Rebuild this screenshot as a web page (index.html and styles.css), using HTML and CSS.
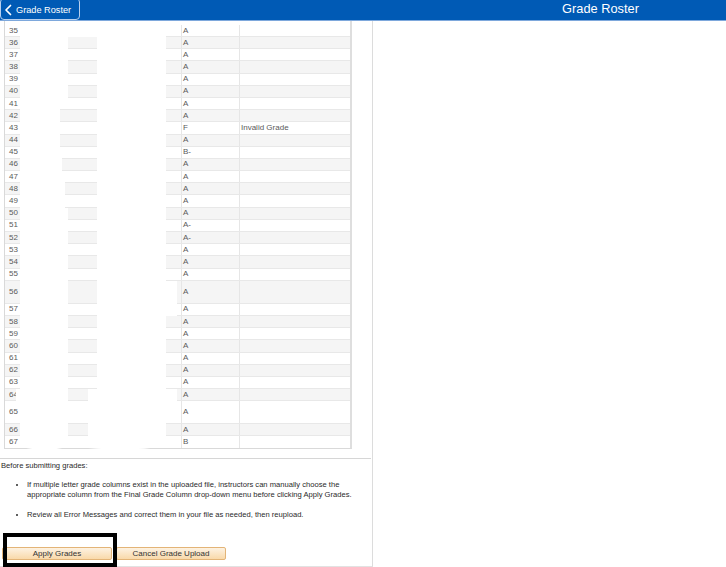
FILE: index.html
```html
<!DOCTYPE html>
<html lang="en">
<head>
<meta charset="utf-8">
<title>Grade Roster</title>
<link rel="stylesheet" href="styles.css">
</head>
<body>
<header class="topbar">
  <button class="back" type="button">
    <svg class="back-icon" width="8" height="12" viewBox="0 0 8 12"><polyline points="6.5,1.5 2,6 6.5,10.5" fill="none" stroke="#fff" stroke-width="1.7" stroke-linecap="round" stroke-linejoin="round"/></svg>
    <span>Grade Roster</span>
  </button>
  <h1 class="title">Grade Roster</h1>
</header>
<div class="page">
  <section class="panel">
    <div class="table-wrap">
      <div class="grid">
        <div class="row row--first"><div class="c num">35</div><div class="c n1"></div><div class="c n2"></div><div class="c grade">A</div><div class="c msg"></div></div>
        <div class="row alt"><div class="c num">36</div><div class="c n1"></div><div class="c n2"></div><div class="c grade">A</div><div class="c msg"></div></div>
        <div class="row"><div class="c num">37</div><div class="c n1"></div><div class="c n2"></div><div class="c grade">A</div><div class="c msg"></div></div>
        <div class="row alt"><div class="c num">38</div><div class="c n1"></div><div class="c n2"></div><div class="c grade">A</div><div class="c msg"></div></div>
        <div class="row"><div class="c num">39</div><div class="c n1"></div><div class="c n2"></div><div class="c grade">A</div><div class="c msg"></div></div>
        <div class="row alt"><div class="c num">40</div><div class="c n1"></div><div class="c n2"></div><div class="c grade">A</div><div class="c msg"></div></div>
        <div class="row"><div class="c num">41</div><div class="c n1"></div><div class="c n2"></div><div class="c grade">A</div><div class="c msg"></div></div>
        <div class="row alt"><div class="c num">42</div><div class="c n1"></div><div class="c n2"></div><div class="c grade">A</div><div class="c msg"></div></div>
        <div class="row"><div class="c num">43</div><div class="c n1"></div><div class="c n2"></div><div class="c grade">F</div><div class="c msg">Invalid Grade</div></div>
        <div class="row alt"><div class="c num">44</div><div class="c n1"></div><div class="c n2"></div><div class="c grade">A</div><div class="c msg"></div></div>
        <div class="row"><div class="c num">45</div><div class="c n1"></div><div class="c n2"></div><div class="c grade">B-</div><div class="c msg"></div></div>
        <div class="row alt"><div class="c num">46</div><div class="c n1"></div><div class="c n2"></div><div class="c grade">A</div><div class="c msg"></div></div>
        <div class="row"><div class="c num">47</div><div class="c n1"></div><div class="c n2"></div><div class="c grade">A</div><div class="c msg"></div></div>
        <div class="row alt"><div class="c num">48</div><div class="c n1"></div><div class="c n2"></div><div class="c grade">A</div><div class="c msg"></div></div>
        <div class="row"><div class="c num">49</div><div class="c n1"></div><div class="c n2"></div><div class="c grade">A</div><div class="c msg"></div></div>
        <div class="row alt"><div class="c num">50</div><div class="c n1"></div><div class="c n2"></div><div class="c grade">A</div><div class="c msg"></div></div>
        <div class="row"><div class="c num">51</div><div class="c n1"></div><div class="c n2"></div><div class="c grade">A-</div><div class="c msg"></div></div>
        <div class="row alt"><div class="c num">52</div><div class="c n1"></div><div class="c n2"></div><div class="c grade">A-</div><div class="c msg"></div></div>
        <div class="row"><div class="c num">53</div><div class="c n1"></div><div class="c n2"></div><div class="c grade">A</div><div class="c msg"></div></div>
        <div class="row alt"><div class="c num">54</div><div class="c n1"></div><div class="c n2"></div><div class="c grade">A</div><div class="c msg"></div></div>
        <div class="row"><div class="c num">55</div><div class="c n1"></div><div class="c n2"></div><div class="c grade">A</div><div class="c msg"></div></div>
        <div class="row alt tall"><div class="c num">56</div><div class="c n1"></div><div class="c n2"></div><div class="c grade">A</div><div class="c msg"></div></div>
        <div class="row"><div class="c num">57</div><div class="c n1"></div><div class="c n2"></div><div class="c grade">A</div><div class="c msg"></div></div>
        <div class="row alt"><div class="c num">58</div><div class="c n1"></div><div class="c n2"></div><div class="c grade">A</div><div class="c msg"></div></div>
        <div class="row"><div class="c num">59</div><div class="c n1"></div><div class="c n2"></div><div class="c grade">A</div><div class="c msg"></div></div>
        <div class="row alt"><div class="c num">60</div><div class="c n1"></div><div class="c n2"></div><div class="c grade">A</div><div class="c msg"></div></div>
        <div class="row"><div class="c num">61</div><div class="c n1"></div><div class="c n2"></div><div class="c grade">A</div><div class="c msg"></div></div>
        <div class="row alt"><div class="c num">62</div><div class="c n1"></div><div class="c n2"></div><div class="c grade">A</div><div class="c msg"></div></div>
        <div class="row"><div class="c num">63</div><div class="c n1"></div><div class="c n2"></div><div class="c grade">A</div><div class="c msg"></div></div>
        <div class="row alt"><div class="c num">64</div><div class="c n1"></div><div class="c n2"></div><div class="c grade">A</div><div class="c msg"></div></div>
        <div class="row tall"><div class="c num">65</div><div class="c n1"></div><div class="c n2"></div><div class="c grade">A</div><div class="c msg"></div></div>
        <div class="row alt"><div class="c num">66</div><div class="c n1"></div><div class="c n2"></div><div class="c grade">A</div><div class="c msg"></div></div>
        <div class="row"><div class="c num">67</div><div class="c n1"></div><div class="c n2"></div><div class="c grade">B</div><div class="c msg"></div></div>
      </div>
      <svg class="redact" width="372" height="432" viewBox="0 21 372 432" aria-hidden="true">
        <path fill="#fff" d="M20 21 H97 V37 H68 V98 H60 V147 H62 V171 H65 V208 H68 V447 Q45 452 20 447 V402 H16 V389 H20 Z"/>
        <path fill="#fff" d="M97 21 H158 Q166 23 166 37 V281 H177 V316 H166 V389 H177 V402 H166 V446 Q130 452 88 448 V389 H97 Z"/>
      </svg>
    </div>
    <div class="notes">
      <p class="notes-title">Before submitting grades:</p>
      <ul class="notes-list">
        <li>If multiple letter grade columns exist in the uploaded file, instructors can manually choose the appropriate column from the Final Grade Column drop-down menu before clicking Apply Grades.</li>
        <li>Review all Error Messages and correct them in your file as needed, then reupload.</li>
      </ul>
      <div class="actions">
        <button class="btn" type="button">Apply Grades</button>
        <button class="btn" type="button">Cancel Grade Upload</button>
      </div>
    </div>
  </section>
</div>
<div class="highlight" aria-hidden="true"></div>
</body>
</html>
```

FILE: styles.css
```css
html, body {
  margin: 0;
  padding: 0;
  overflow: hidden;
  background: #fff;
}
body {
  font-family: "Liberation Sans", Arial, sans-serif;
  width: 726px;
  height: 567px;
  position: relative;
}

/* Top bar */
.topbar {
  box-sizing: border-box;
  height: 21px;
  background: #005ab5;
  border-bottom: 1px solid #7ea8dc;
  display: flex;
  align-items: flex-start;
  overflow: hidden;
}
.back {
  box-sizing: border-box;
  margin-top: -2px;
  width: 80px;
  height: 22px;
  border: 1px solid #b8cfee;
  border-radius: 4px;
  background: transparent;
  color: #fff;
  display: flex;
  align-items: center;
  gap: 4px;
  padding: 2px 0 0 3px;
  font-family: "Liberation Sans", Arial, sans-serif;
  font-size: 9.2px;
  cursor: pointer;
}
.back-icon {
  display: block;
  flex: none;
}
.title {
  margin: 0 0 0 auto;
  width: 251px;
  text-align: center;
  font-size: 12.8px;
  font-weight: normal;
  line-height: 18px;
  color: #fff;
}

/* Page / panel */
.page {
  display: flex;
}
.panel {
  box-sizing: border-box;
  width: 373px;
  height: 546px;
  border-right: 1px solid #dcdcdc;
  border-bottom: 1px solid #e2e2e2;
  display: flex;
  flex-direction: column;
}
.table-wrap {
  position: relative;
  padding-left: 4px;
}
.grid {
  width: 348px;
  box-sizing: border-box;
  border-left: 1px solid #d9d9d9;
  border-right: 2px solid #dedede;
  border-bottom: 1px solid #d9d9d9;
  font-size: 8px;
  color: #5a5a5a;
}
.row {
  display: grid;
  grid-template-columns: 55px 37px 84px 58px 1fr;
  height: 12.2px;
  box-sizing: border-box;
  border-bottom: 1px solid #e8e8e8;
  background: #fff;
}
.row:last-child {
  border-bottom: 0;
  height: 11.5px;
}
.row.alt {
  background: #f5f5f5;
}
.row.tall {
  height: 23px;
}
.row--first {
  height: 16px;
  padding-top: 4px;
}
.c {
  box-sizing: border-box;
  display: flex;
  align-items: center;
  line-height: 1;
  white-space: nowrap;
  overflow: hidden;
}
.num {
  padding-left: 4px;
}
.n2, .grade, .msg {
  border-left: 1px solid #e6e6e6;
}
.grade, .msg {
  padding-left: 1px;
}
.redact {
  position: absolute;
  left: 0;
  top: 0;
  display: block;
}

/* Notes */
.notes {
  margin-top: 9.5px;
  border-top: 1px solid #d6d6d6;
  width: 371px;
  font-size: 7.6px;
  color: #2a2a2a;
}
.notes-title {
  margin: 0;
  padding: 2px 0 0 1px;
  line-height: 10px;
}
.notes-list {
  margin: 9px 0 0;
  padding-left: 27px;
  line-height: 9.3px;
}
.notes-list li + li {
  margin-top: 11px;
}
.actions {
  display: flex;
  gap: 4px;
  margin-top: 28px;
  padding-left: 2px;
}
.btn {
  box-sizing: border-box;
  width: 110px;
  height: 13px;
  padding: 0;
  border: 1px solid #e3b477;
  border-radius: 2px;
  background: linear-gradient(#fdf2e2, #f9d9aa);
  font-family: "Liberation Sans", Arial, sans-serif;
  font-size: 8px;
  color: #333;
  line-height: 11px;
}

/* Annotation box */
.highlight {
  position: absolute;
  left: 3px;
  top: 533px;
  width: 114px;
  height: 34px;
  box-sizing: border-box;
  border: 4.5px solid #000;
  pointer-events: none;
}
```
